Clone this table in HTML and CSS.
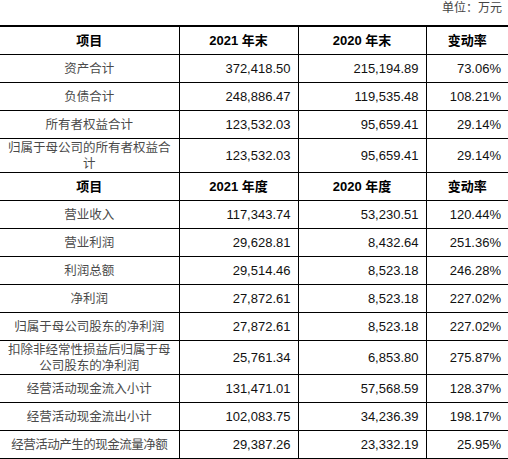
FILE: index.html
```html
<!DOCTYPE html>
<html lang="zh-CN">
<head>
    <meta charset="UTF-8">
    <title>财务数据</title>
    <link rel="stylesheet" href="styles.css">
</head>
<body>

<div class="unit">单位：万元</div>

<table class="fin">
    <colgroup>
        <col class="c-name">
        <col class="c-num">
        <col class="c-num2">
        <col class="c-rate">
    </colgroup>
    <tr class="head">
        <td>项目</td>
        <td>2021 年末</td>
        <td>2020 年末</td>
        <td>变动率</td>
    </tr>
    <tr>
        <td class="name">资产合计</td>
        <td class="num">372,418.50</td>
        <td class="num">215,194.89</td>
        <td class="num">73.06%</td>
    </tr>
    <tr>
        <td class="name">负债合计</td>
        <td class="num">248,886.47</td>
        <td class="num">119,535.48</td>
        <td class="num">108.21%</td>
    </tr>
    <tr>
        <td class="name">所有者权益合计</td>
        <td class="num">123,532.03</td>
        <td class="num">95,659.41</td>
        <td class="num">29.14%</td>
    </tr>
    <tr class="tall">
        <td class="name">归属于母公司的所有者权益合计</td>
        <td class="num">123,532.03</td>
        <td class="num">95,659.41</td>
        <td class="num">29.14%</td>
    </tr>
    <tr class="head">
        <td>项目</td>
        <td>2021 年度</td>
        <td>2020 年度</td>
        <td>变动率</td>
    </tr>
    <tr>
        <td class="name">营业收入</td>
        <td class="num">117,343.74</td>
        <td class="num">53,230.51</td>
        <td class="num">120.44%</td>
    </tr>
    <tr>
        <td class="name">营业利润</td>
        <td class="num">29,628.81</td>
        <td class="num">8,432.64</td>
        <td class="num">251.36%</td>
    </tr>
    <tr>
        <td class="name">利润总额</td>
        <td class="num">29,514.46</td>
        <td class="num">8,523.18</td>
        <td class="num">246.28%</td>
    </tr>
    <tr>
        <td class="name">净利润</td>
        <td class="num">27,872.61</td>
        <td class="num">8,523.18</td>
        <td class="num">227.02%</td>
    </tr>
    <tr>
        <td class="name">归属于母公司股东的净利润</td>
        <td class="num">27,872.61</td>
        <td class="num">8,523.18</td>
        <td class="num">227.02%</td>
    </tr>
    <tr class="tall">
        <td class="name">扣除非经常性损益后归属于母公司股东的净利润</td>
        <td class="num">25,761.34</td>
        <td class="num">6,853.80</td>
        <td class="num">275.87%</td>
    </tr>
    <tr>
        <td class="name">经营活动现金流入小计</td>
        <td class="num">131,471.01</td>
        <td class="num">57,568.59</td>
        <td class="num">128.37%</td>
    </tr>
    <tr>
        <td class="name">经营活动现金流出小计</td>
        <td class="num">102,083.75</td>
        <td class="num">34,236.39</td>
        <td class="num">198.17%</td>
    </tr>
    <tr>
        <td class="name tight">经营活动产生的现金流量净额</td>
        <td class="num">29,387.26</td>
        <td class="num">23,332.19</td>
        <td class="num">25.95%</td>
    </tr>
</table>

</body>
</html>
```

FILE: styles.css
```css
body {
    margin: 0;
    padding: 0;
    background-color: #ffffff;
    font-family: "Liberation Sans", "Noto Sans CJK SC", sans-serif;
}
.unit {
    height: 25px;
    line-height: 17px;
    text-align: right;
    padding-right: 6px;
    font-size: 12px;
    color: #444;
}
.fin {
    width: 508px;
    table-layout: fixed;
    border-collapse: collapse;
    border-top: 2px solid #000;
    font-size: 13px;
    color: #111;
}
.c-name {
    width: 179px;
}
.c-num {
    width: 119px;
}
.c-num2 {
    width: 128px;
}
.c-rate {
    width: 82px;
}
.fin td {
    height: 27px;
    padding: 0 8px 0 8px;
    border: 1px solid #000;
    line-height: 16px;
}
.fin td:first-child {
    border-left: none;
}
.fin td:last-child {
    border-right: none;
}
.fin tr.head td {
    text-align: center;
    font-weight: bold;
    color: #000;
}
.fin tr.tall td {
    height: 33px;
}
.fin td.name {
    text-align: center;
    padding: 0 5px;
    font-size: 12.5px;
    color: #4a4a4a;
}
.fin td.tight {
    padding: 0 2px;
    letter-spacing: -0.5px;
}
.fin td.num {
    text-align: right;
    padding-right: 7px;
}
```
